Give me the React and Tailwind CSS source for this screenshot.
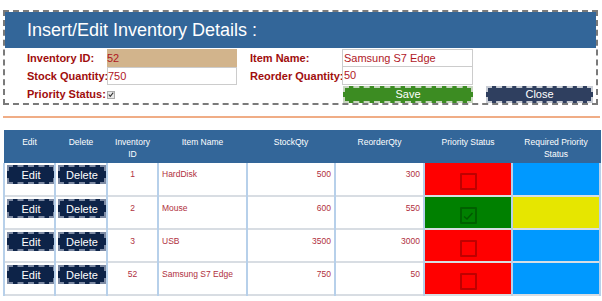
import React from "react";

const rows = [
  { id: 1, name: "HardDisk", stock: 500, reorder: 300, priority: false },
  { id: 2, name: "Mouse", stock: 600, reorder: 550, priority: true },
  { id: 3, name: "USB", stock: 3500, reorder: 3000, priority: false },
  { id: 52, name: "Samsung S7 Edge", stock: 750, reorder: 50, priority: false },
];

function Box({ checked }) {
  return (
    <div className="mx-auto mt-[10px] w-[17px] h-[17px] border-2 border-black/25 rounded-[1px] flex items-center justify-center">
      {checked && (
        <svg width="12" height="12" viewBox="0 0 12 12">
          <path d="M2 6.5 L5 9 L10.5 3" fill="none" stroke="rgba(0,0,0,0.3)" strokeWidth="1.6" />
        </svg>
      )}
    </div>
  );
}

export default function App() {
  return (
    <div className="w-[602px] h-[301px] bg-white font-['Liberation_Sans',Arial,sans-serif] pt-[10px] overflow-hidden">
      {/* edit panel */}
      <div className="ml-[3px] w-[595px] h-[95px] border-2 border-dashed border-[#7a7a7a]">
        <div className="h-[36px] bg-[#336699] flex items-center pl-[22px]">
          <h1 className="text-white text-[18px] leading-none">Insert/Edit Inventory Details :</h1>
        </div>
        <div className="pl-[22px] pt-[1px] flex flex-col text-[11px] leading-none whitespace-nowrap">
          <div className="flex h-[18px] items-center">
            <span className="w-[80px] font-bold text-[#a00d0d]">Inventory ID:</span>
            <div className="w-[130px] h-[18px] bg-[#d2b48c] text-[#b0171f] flex items-center">52</div>
            <span className="ml-[13px] w-[92px] font-bold text-[#a00d0d]">Item Name:</span>
            <div className="w-[131px] h-[18px] border border-[#cccccc] text-[#b0171f] flex items-center pl-[1px]">Samsung S7 Edge</div>
          </div>
          <div className="flex h-[18px] items-center">
            <span className="w-[80px] font-bold text-[#a00d0d]">Stock Quantity:</span>
            <div className="w-[130px] h-[18px] border border-[#cccccc] text-[#b0171f] flex items-center">750</div>
            <span className="ml-[13px] w-[92px] font-bold text-[#a00d0d]">Reorder Quantity:</span>
            <div className="w-[131px] h-[18px] border border-[#cccccc] border-t-0 text-[#b0171f] flex items-center pl-[1px]">50</div>
          </div>
          <div className="flex h-[19px] items-center">
            <span className="w-[80px] font-bold text-[#a00d0d]">Priority Status:</span>
            <span className="w-[8px] h-[8px] bg-[#e8e8e8] border border-[#aaa] flex items-center justify-center">
              <svg width="7" height="7" viewBox="0 0 8 8">
                <path d="M1 4 L3 6.5 L7 1.5" fill="none" stroke="#333" strokeWidth="1.4" />
              </svg>
            </span>
            <div className="ml-[228px] w-[130px] h-[17px] bg-[#3c8c22] border-2 border-dashed border-[#c8d6c0] text-white text-[11px] flex items-center justify-center">Save</div>
            <div className="ml-[13px] w-[107px] h-[17px] bg-[#2f3f5f] border-2 border-dashed border-[#c8ccd4] text-white text-[11px] flex items-center justify-center">Close</div>
          </div>
        </div>
      </div>

      <div className="ml-[3px] mt-[11px] w-[597px] h-[2px] bg-[#f0ad86]"></div>

      {/* table */}
      <table className="ml-[3px] mt-[12px] w-[596px] table-fixed border-collapse text-[8.5px] leading-[12px]">
        <colgroup>
          <col className="w-[51px]" />
          <col className="w-[52px]" />
          <col className="w-[51px]" />
          <col className="w-[89px]" />
          <col className="w-[88px]" />
          <col className="w-[89px]" />
          <col className="w-[88px]" />
          <col className="w-[88px]" />
        </colgroup>
        <thead>
          <tr className="h-[33px] bg-[#336699] text-white">
            {["Edit", "Delete", "Inventory ID", "Item Name", "StockQty", "ReorderQty", "Priority Status", "Required Priority Status"].map((h) => (
              <th key={h} className="font-normal align-top pt-[6px] px-[4px] text-center border-x border-[#336699]">{h}</th>
            ))}
          </tr>
        </thead>
        <tbody>
          {rows.map((r) => (
            <tr key={r.id} className="h-[33px] text-[#b03040] border-b-2 border-[#d8dde3]">
              <td className="border-x-2 border-[#b7d0ea] align-top pt-[2px] pl-[2px]">
                <div className="w-[48px] h-[19px] bg-[#0d2348] border-2 border-dashed border-[#7d8aa3] text-white text-[11px] flex items-center justify-center">Edit</div>
              </td>
              <td className="border-x-2 border-[#b7d0ea] align-top pt-[2px] pl-[2px]">
                <div className="w-[48px] h-[19px] bg-[#0d2348] border-2 border-dashed border-[#7d8aa3] text-white text-[11px] flex items-center justify-center">Delete</div>
              </td>
              <td className="border-x-2 border-[#b7d0ea] align-top pt-[5px] text-center">{r.id}</td>
              <td className="border-x-2 border-[#b7d0ea] align-top pt-[5px] pl-[3px]">{r.name}</td>
              <td className="border-x-2 border-[#b7d0ea] align-top pt-[5px] pr-[3px] text-right">{r.stock}</td>
              <td className="border-x-2 border-[#b7d0ea] align-top pt-[5px] pr-[3px] text-right">{r.reorder}</td>
              <td className={"border-x-2 border-[#b7d0ea] align-top " + (r.priority ? "bg-[#008000]" : "bg-[#ff0000]")}>
                <Box checked={r.priority} />
              </td>
              <td className={"border-x-2 border-[#b7d0ea] " + (r.priority ? "bg-[#e6e600]" : "bg-[#0099ff]")}></td>
            </tr>
          ))}
        </tbody>
      </table>
    </div>
  );
}
